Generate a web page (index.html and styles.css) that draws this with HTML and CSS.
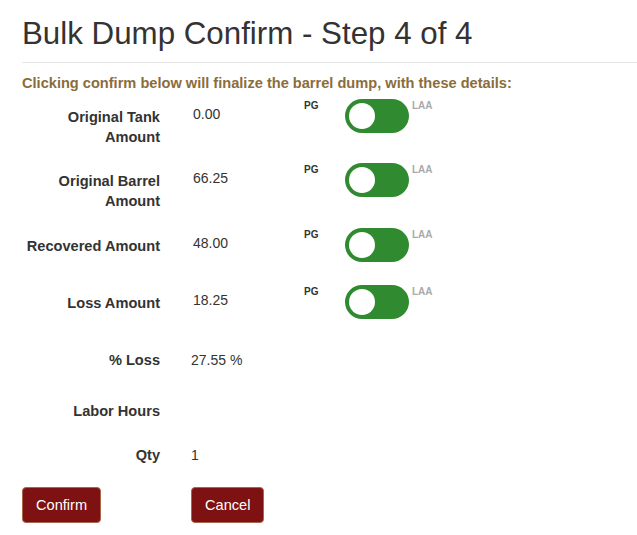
FILE: index.html
```html
<!DOCTYPE html>
<html lang="en">
<head>
<meta charset="utf-8">
<title>Bulk Dump Confirm - Step 4 of 4</title>
<link rel="stylesheet" href="styles.css">
</head>
<body>
<div class="page">
  <h1 class="title">Bulk Dump Confirm - Step 4 of 4</h1>
  <hr class="rule">
  <p class="intro">Clicking confirm below will finalize the barrel dump, with these details:</p>
  <div class="details">
    <div class="row r1">
      <div class="label">Original Tank<br>Amount</div>
      <div class="value up">0.00</div>
      <div class="unit pg">PG</div>
      <div class="switch"><span class="knob"></span></div>
      <div class="unit laa">LAA</div>
    </div>
    <div class="row r2">
      <div class="label">Original Barrel<br>Amount</div>
      <div class="value up">66.25</div>
      <div class="unit pg">PG</div>
      <div class="switch"><span class="knob"></span></div>
      <div class="unit laa">LAA</div>
    </div>
    <div class="row r3">
      <div class="label">Recovered Amount</div>
      <div class="value up">48.00</div>
      <div class="unit pg">PG</div>
      <div class="switch"><span class="knob"></span></div>
      <div class="unit laa">LAA</div>
    </div>
    <div class="row r4">
      <div class="label">Loss Amount</div>
      <div class="value up">18.25</div>
      <div class="unit pg">PG</div>
      <div class="switch"><span class="knob"></span></div>
      <div class="unit laa">LAA</div>
    </div>
    <div class="row r5">
      <div class="label">% Loss</div>
      <div class="value">27.55 %</div>
    </div>
    <div class="row r6">
      <div class="label">Labor Hours</div>
      <div class="value"></div>
    </div>
    <div class="row r7">
      <div class="label">Qty</div>
      <div class="value">1</div>
    </div>
    <div class="row actions">
      <button class="btn" type="button">Confirm</button>
      <button class="btn cancel" type="button">Cancel</button>
    </div>
  </div>
</div>
</body>
</html>
```
FILE: styles.css
```css
html, body {
  margin: 0;
  padding: 0;
  background: #fff;
}
body {
  font-family: "Liberation Sans", Arial, Helvetica, sans-serif;
  font-size: 14px;
  line-height: 20px;
  color: #333;
}
.page {
  padding: 16px 0 0 22px;
}
.title {
  margin: 0;
  font-size: 31.3px;
  line-height: 35px;
  font-weight: 400;
  color: #333;
}
.rule {
  margin: 11px 0 0 0;
  border: 0;
  border-top: 1px solid #e6e6e6;
  height: 0;
}
.intro {
  margin: 10px 0 0 0;
  font-size: 14.6px;
  font-weight: 700;
  color: #8a6d3b;
}
.details {
  margin-top: 6px;
}
.row {
  display: grid;
  grid-template-columns: 138px 144px 41px 67px auto;
  column-gap: 0;
  align-items: start;
}
.r1 { height: 64px; }
.r2 { height: 65px; }
.r3 { height: 57px; }
.r4 { height: 57px; }
.r5 { height: 51px; }
.r6 { height: 44px; }
.r7 { height: 50px; }
.label {
  text-align: right;
  font-size: 14.6px;
  font-weight: 700;
  padding-top: 7.5px;
  color: #333;
}
.value {
  padding-top: 7.5px;
  padding-left: 31px;
  color: #333;
}
.value.up {
  padding-top: 4.5px;
  padding-left: 33px;
}
.unit {
  font-size: 10px;
  line-height: 12px;
  font-weight: 700;
  padding-top: 1px;
}
.pg {
  color: #333;
}
.laa {
  color: #aaa;
}
.switch {
  position: relative;
  width: 64px;
  height: 34px;
  border-radius: 17px;
  background: #2f8a30;
}
.knob {
  position: absolute;
  left: 4px;
  top: 4px;
  width: 26px;
  height: 26px;
  border-radius: 50%;
  background: #fff;
}
.actions {
  grid-template-columns: 169px auto;
  height: auto;
}
.btn {
  justify-self: start;
  font-family: "Liberation Sans", Arial, Helvetica, sans-serif;
  font-size: 14.6px;
  line-height: 20px;
  padding: 7px 13px 7px;
  border: 1px solid #a8664a;
  border-radius: 4px;
  background: #7e1111;
  color: #fff;
  cursor: pointer;
}
```
